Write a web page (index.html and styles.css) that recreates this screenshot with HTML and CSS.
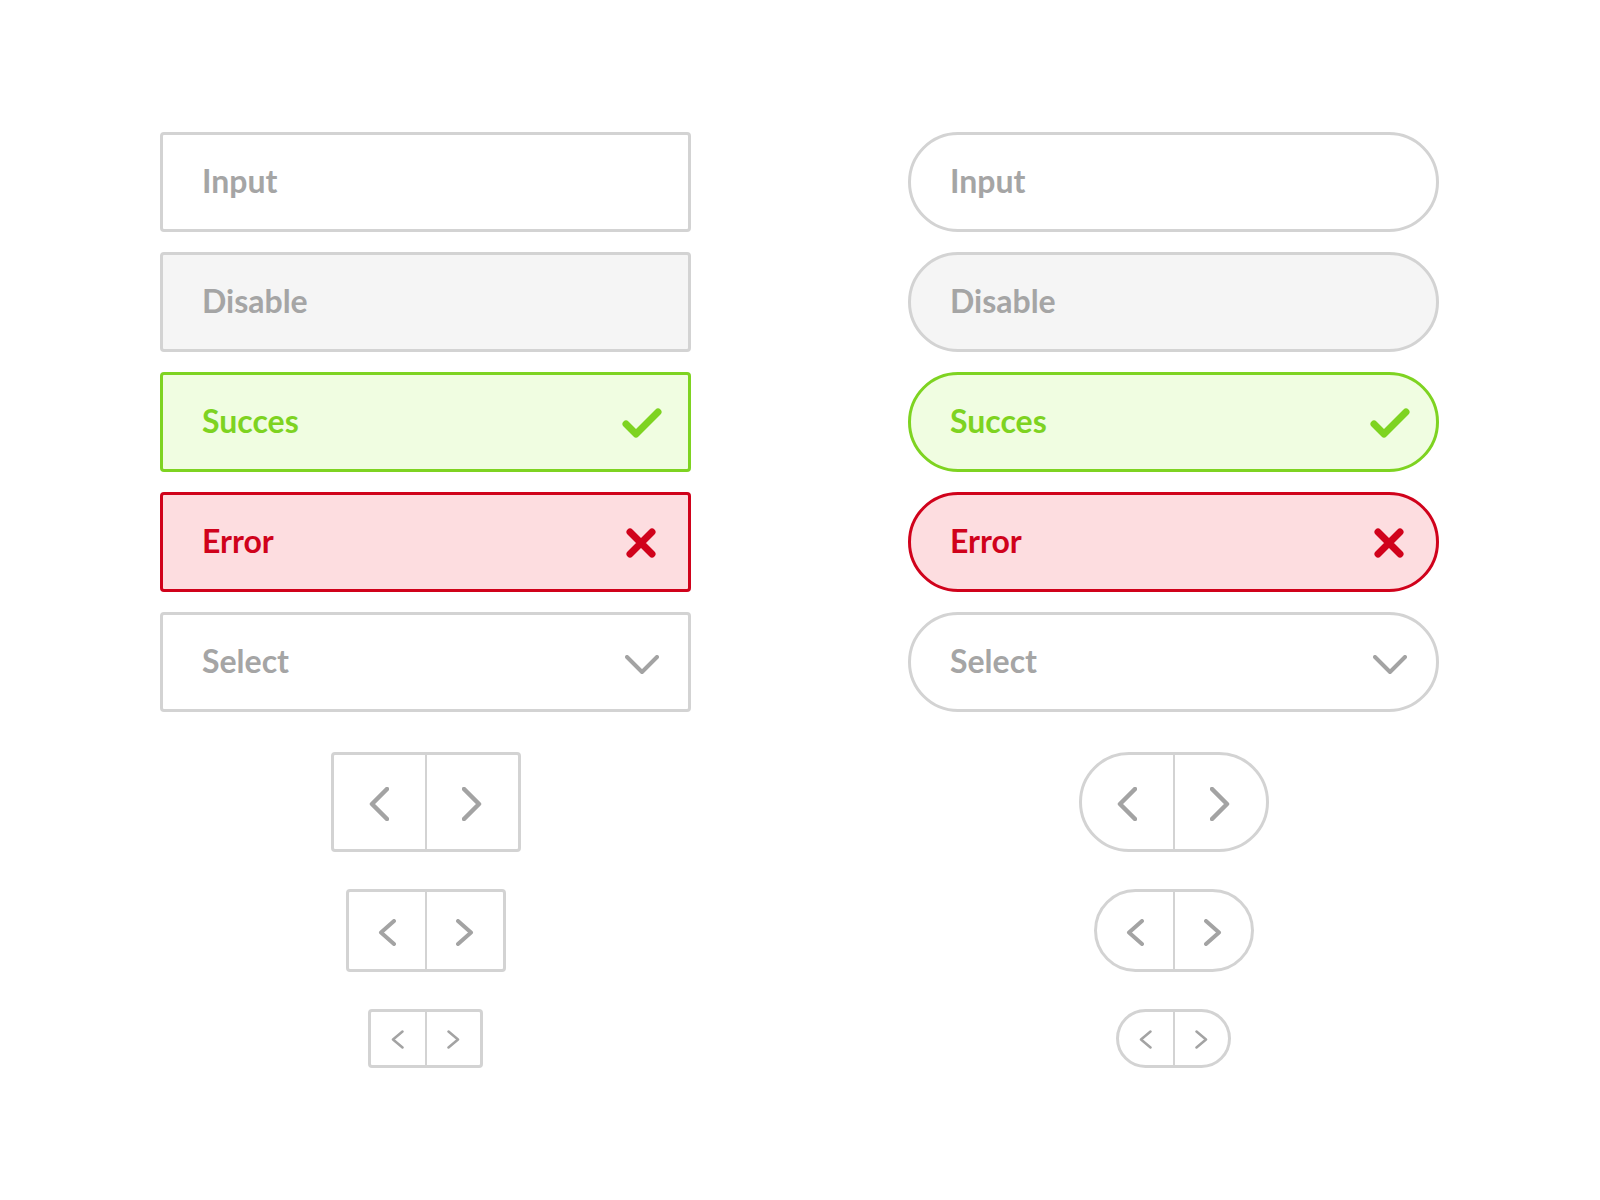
FILE: index.html
```html
<!DOCTYPE html>
<html>
<head>
<meta charset="utf-8">
<link rel="stylesheet" href="styles.css">
</head>
<body>
<div class="page">
  <div class="col">
    <div class="field">Input</div>
    <div class="field disabled">Disable</div>
    <div class="field success"><span>Succes</span>
      <svg class="ico-check" width="40" height="32" viewBox="0 0 40 32"><polyline points="4,17 14,27 36,5" fill="none" stroke="#7ed321" stroke-width="7" stroke-linecap="round" stroke-linejoin="round"/></svg>
    </div>
    <div class="field error"><span>Error</span>
      <svg class="ico-x" width="30" height="30" viewBox="0 0 30 30"><path d="M4 4 L26 26 M26 4 L4 26" fill="none" stroke="#d0021b" stroke-width="7" stroke-linecap="round"/></svg>
    </div>
    <div class="field"><span>Select</span>
      <svg class="ico-down" width="34" height="20" viewBox="0 0 34 20"><polyline points="2,2 17,17 32,2" fill="none" stroke="#a3a3a3" stroke-width="4" stroke-linecap="round" stroke-linejoin="round"/></svg>
    </div>
    <div class="pagers">
      <div class="pager lg">
        <div class="half"><svg width="20" height="34" viewBox="0 0 20 34"><polyline points="18,2 3,17 18,32" fill="none" stroke="#a3a3a3" stroke-width="4.5" stroke-linecap="round" stroke-linejoin="round"/></svg></div>
        <div class="half"><svg width="20" height="34" viewBox="0 0 20 34"><polyline points="2,2 17,17 2,32" fill="none" stroke="#a3a3a3" stroke-width="4.5" stroke-linecap="round" stroke-linejoin="round"/></svg></div>
      </div>
      <div class="pager md">
        <div class="half"><svg width="18" height="27" viewBox="0 0 18 27"><polyline points="16,2 3,13.5 16,25" fill="none" stroke="#a3a3a3" stroke-width="4" stroke-linecap="round" stroke-linejoin="round"/></svg></div>
        <div class="half"><svg width="18" height="27" viewBox="0 0 18 27"><polyline points="2,2 15,13.5 2,25" fill="none" stroke="#a3a3a3" stroke-width="4" stroke-linecap="round" stroke-linejoin="round"/></svg></div>
      </div>
      <div class="pager sm">
        <div class="half"><svg width="13" height="19" viewBox="0 0 13 19"><polyline points="11.5,1.5 2,9.5 11.5,17.5" fill="none" stroke="#a3a3a3" stroke-width="2.5" stroke-linecap="round" stroke-linejoin="round"/></svg></div>
        <div class="half"><svg width="13" height="19" viewBox="0 0 13 19"><polyline points="1.5,1.5 11,9.5 1.5,17.5" fill="none" stroke="#a3a3a3" stroke-width="2.5" stroke-linecap="round" stroke-linejoin="round"/></svg></div>
      </div>
    </div>
  </div>

  <div class="col round">
    <div class="field">Input</div>
    <div class="field disabled">Disable</div>
    <div class="field success"><span>Succes</span>
      <svg class="ico-check" width="40" height="32" viewBox="0 0 40 32"><polyline points="4,17 14,27 36,5" fill="none" stroke="#7ed321" stroke-width="7" stroke-linecap="round" stroke-linejoin="round"/></svg>
    </div>
    <div class="field error"><span>Error</span>
      <svg class="ico-x" width="30" height="30" viewBox="0 0 30 30"><path d="M4 4 L26 26 M26 4 L4 26" fill="none" stroke="#d0021b" stroke-width="7" stroke-linecap="round"/></svg>
    </div>
    <div class="field"><span>Select</span>
      <svg class="ico-down" width="34" height="20" viewBox="0 0 34 20"><polyline points="2,2 17,17 32,2" fill="none" stroke="#a3a3a3" stroke-width="4" stroke-linecap="round" stroke-linejoin="round"/></svg>
    </div>
    <div class="pagers">
      <div class="pager lg">
        <div class="half"><svg width="20" height="34" viewBox="0 0 20 34"><polyline points="18,2 3,17 18,32" fill="none" stroke="#a3a3a3" stroke-width="4.5" stroke-linecap="round" stroke-linejoin="round"/></svg></div>
        <div class="half"><svg width="20" height="34" viewBox="0 0 20 34"><polyline points="2,2 17,17 2,32" fill="none" stroke="#a3a3a3" stroke-width="4.5" stroke-linecap="round" stroke-linejoin="round"/></svg></div>
      </div>
      <div class="pager md">
        <div class="half"><svg width="18" height="27" viewBox="0 0 18 27"><polyline points="16,2 3,13.5 16,25" fill="none" stroke="#a3a3a3" stroke-width="4" stroke-linecap="round" stroke-linejoin="round"/></svg></div>
        <div class="half"><svg width="18" height="27" viewBox="0 0 18 27"><polyline points="2,2 15,13.5 2,25" fill="none" stroke="#a3a3a3" stroke-width="4" stroke-linecap="round" stroke-linejoin="round"/></svg></div>
      </div>
      <div class="pager sm">
        <div class="half"><svg width="13" height="19" viewBox="0 0 13 19"><polyline points="11.5,1.5 2,9.5 11.5,17.5" fill="none" stroke="#a3a3a3" stroke-width="2.5" stroke-linecap="round" stroke-linejoin="round"/></svg></div>
        <div class="half"><svg width="13" height="19" viewBox="0 0 13 19"><polyline points="1.5,1.5 11,9.5 1.5,17.5" fill="none" stroke="#a3a3a3" stroke-width="2.5" stroke-linecap="round" stroke-linejoin="round"/></svg></div>
      </div>
    </div>
  </div>
</div>
</body>
</html>
```

FILE: styles.css
```css
html, body {
  margin: 0;
  padding: 0;
  background: #ffffff;
}
body {
  font-family: Lato, "Open Sans", "Liberation Sans", sans-serif;
  width: 1600px;
  height: 1200px;
}
.page {
  display: flex;
  gap: 217px;
  padding: 132px 0 0 160px;
}
.col {
  width: 531px;
  display: flex;
  flex-direction: column;
  gap: 20px;
}
.field {
  box-sizing: border-box;
  height: 100px;
  border: 3px solid #d3d3d3;
  border-radius: 4px;
  background: #ffffff;
  display: flex;
  align-items: center;
  justify-content: space-between;
  padding: 0 30px 3px 39px;
  font-size: 32px;
  font-weight: 700;
  color: #a5a5a5;
}
.field.disabled {
  background: #f5f5f5;
}
.field.success {
  border-color: #7ed321;
  background: #f0fde1;
  color: #7ed321;
}
.field.error {
  border-color: #d0021b;
  background: #fddde0;
  color: #d0021b;
}
.field .ico-check { margin-right: -4px; margin-top: 5px; }
.field .ico-x { margin-right: 2px; margin-top: 4px; }
.field .ico-down { margin-right: -1px; margin-top: 8px; }

.round .field {
  border-radius: 50px;
}

.pagers {
  margin-top: 20px;
  display: flex;
  flex-direction: column;
  align-items: center;
  gap: 37px;
}
.pager {
  box-sizing: border-box;
  display: flex;
  border: 3px solid #d3d3d3;
  border-radius: 4px;
  background: #ffffff;
}
.pager .half {
  flex: 1;
  display: flex;
  align-items: center;
  justify-content: center;
  padding-top: 3px;
}
.pager .half + .half {
  border-left: 2px solid #d3d3d3;
}
.pager.sm .half { padding-top: 2px; }
.pager.lg { width: 190px; height: 100px; }
.pager.md { width: 160px; height: 83px; }
.pager.sm { width: 115px; height: 59px; }
.round .pager.lg { border-radius: 50px; }
.round .pager.md { border-radius: 42px; }
.round .pager.sm { border-radius: 30px; }
```
